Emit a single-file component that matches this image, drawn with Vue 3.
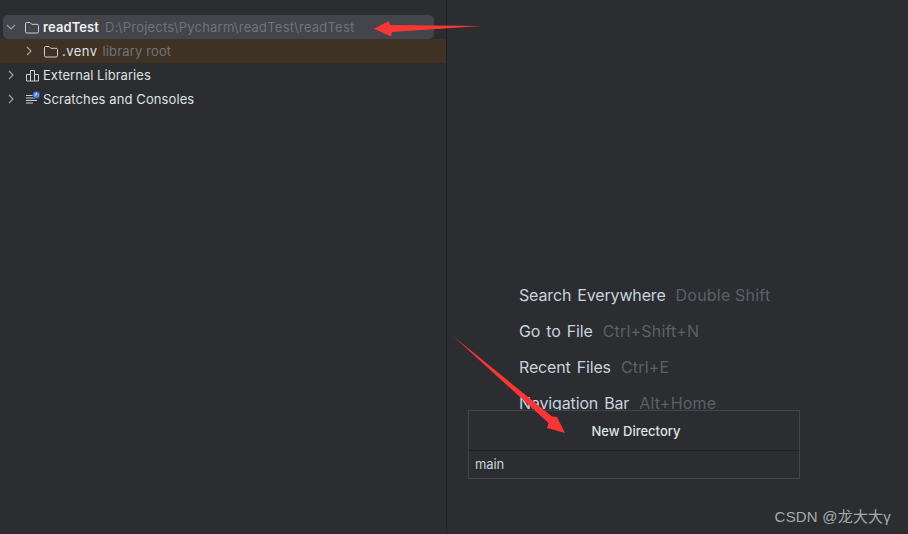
<script setup>
const hints = [
  { label: 'Search Everywhere', key: 'Double Shift' },
  { label: 'Go to File', key: 'Ctrl+Shift+N' },
  { label: 'Recent Files', key: 'Ctrl+E' },
  { label: 'Navigation Bar', key: 'Alt+Home' },
]
</script>

<template>
  <div class="ide">
    <aside class="tree">
      <div class="row selected">
        <svg class="chev" viewBox="0 0 12 12"><path d="M2 4l4 4 4-4" /></svg>
        <svg class="ico" viewBox="0 0 16 16"><path d="M1.500 4.700c0-.7.5-1.200 1.200-1.200h3.300l1.800 1.800h5.500c.7 0 1.200.5 1.200 1.200v6.300c0 .7-.5 1.200-1.200 1.200H2.700c-.7 0-1.200-.5-1.200-1.200z" /></svg>
        <span class="name bold">readTest</span>
        <span class="hint path">D:\Projects\Pycharm\readTest\readTest</span>
      </div>
      <div class="row library">
        <svg class="chev" viewBox="0 0 12 12"><path d="M4 2l4 4-4 4" /></svg>
        <svg class="ico lib-ico" viewBox="0 0 16 16"><path d="M1.500 4.700c0-.7.5-1.200 1.200-1.200h3.300l1.800 1.800h5.500c.7 0 1.200.5 1.200 1.200v6.300c0 .7-.5 1.200-1.200 1.200H2.700c-.7 0-1.200-.5-1.200-1.200z" /></svg>
        <span class="name venv">.venv</span>
        <span class="hint lib">library root</span>
      </div>
      <div class="row">
        <svg class="chev" viewBox="0 0 12 12"><path d="M4 2l4 4-4 4" /></svg>
        <svg class="ico" viewBox="0 0 16 16"><path d="M2.500 7.500h4v6.500h-4zM6.500 3.500h4v10.500h-4zM10.500 7.500h4v6.500h-4z" /></svg>
        <span class="name ext">External Libraries</span>
      </div>
      <div class="row">
        <svg class="chev" viewBox="0 0 12 12"><path d="M4 2l4 4-4 4" /></svg>
        <svg class="ico" viewBox="0 0 16 16">
          <path d="M2 4.500h7M2 7h9M2 9.500h11M2 12h7" />
          <circle class="clock" cx="12.300" cy="3.800" r="3.600" />
          <path class="hands" d="M12.300 1.800v2.200h-1.500" />
        </svg>
        <span class="name">Scratches and Consoles</span>
      </div>
    </aside>

    <main class="editor">
      <ul class="hints">
        <li v-for="h in hints" :key="h.label">
          <span class="action">{{ h.label }}</span>
          <span class="shortcut">{{ h.key }}</span>
        </li>
      </ul>

      <div class="popup">
        <div class="popup-title">New Directory</div>
        <div class="popup-input">main</div>
      </div>
    </main>

    <svg class="arrows" viewBox="0 0 908 534">
      <path d="M481.500 26L392 32 391 36.500 374 28.700 389 21 390 25z" />
      <path d="M453 336L552 416.500 557 417 565 433 547 428 548.500 423z" />
    </svg>

    <div class="mark">CSDN @龙大大γ</div>
  </div>
</template>

<style>
html, body { margin: 0; background: #2b2d30; overflow: hidden; }
</style>

<style scoped>
.ide {
  position: relative;
  width: 908px;
  height: 534px;
  display: flex;
  background: #2b2d30;
  font-family: Inter, "Noto Sans", sans-serif;
  color: #dfe1e5;
  overflow: hidden;
}
.tree {
  width: 446px;
  flex: none;
  padding-top: 15px;
  border-right: 1px solid #1e1f22;
  box-sizing: content-box;
}
.row {
  height: 24px;
  display: flex;
  align-items: center;
  font-size: 13px;
  white-space: nowrap;
  padding-left: 5px;
}
.selected {
  margin: 0 12px 0 3px;
  padding-left: 2px;
  background: #43454a;
  border-radius: 5px;
}
.library {
  background: #3f3225;
  padding-left: 23px;
}
.chev {
  width: 12px;
  height: 12px;
  flex: none;
  fill: none;
  stroke: #9da0a8;
  stroke-width: 1.2;
}
.ico {
  width: 16px;
  height: 16px;
  flex: none;
  margin-left: 7px;
  fill: none;
  stroke: #ced0d6;
  stroke-width: 1;
}
.lib-ico { margin-left: 8px; }
.clock { fill: #548af7; stroke: #2b2d30; stroke-width: 0.6; }
.hands { stroke: #fff; stroke-width: 0.7; }
.name { margin-left: 3px; letter-spacing: 0.1px; }
.venv { margin-left: 3px; letter-spacing: 0.45px; }
.ext { letter-spacing: 0.04px; }
.bold { font-weight: 600; color: #f0f1f3; }
.hint { margin-left: 6px; color: #6f737a; }
.path { letter-spacing: 0.22px; }
.lib { margin-left: 5px; letter-spacing: 0.15px; }
.editor {
  position: relative;
  flex: 1;
  padding: 277px 0 0 72px;
}
.hints {
  list-style: none;
  margin: 0;
  padding: 0;
}
.hints li {
  height: 36px;
  display: flex;
  align-items: center;
  gap: 10px;
  font-size: 16px;
  white-space: nowrap;
}
.action { color: #c9d3df; letter-spacing: -0.15px; word-spacing: 1.7px; }
.shortcut { color: #5c6068; letter-spacing: 0.2px; }
.popup {
  position: absolute;
  left: 21px;
  top: 410px;
  width: 330px;
  height: 67px;
  background: #2b2d30;
  border: 1px solid #43454a;
}
.popup-title {
  height: 39px;
  padding-left: 4px;
  display: flex;
  align-items: center;
  justify-content: center;
  font-size: 13px;
  font-weight: 500;
  color: #dfe1e5;
  border-bottom: 1px solid #1e1f22;
}
.popup-input {
  height: 27px;
  line-height: 27px;
  padding-left: 6px;
  font-size: 13px;
  letter-spacing: -0.1px;
  color: #c9d3df;
}
.arrows {
  position: absolute;
  left: 0;
  top: 0;
  width: 908px;
  height: 534px;
  fill: #f93636;
  pointer-events: none;
}
.mark {
  position: absolute;
  right: 17px;
  top: 505px;
  font-family: "Liberation Sans", "Noto Sans CJK SC", sans-serif;
  font-size: 15px;
  letter-spacing: 0.2px;
  color: #a9aaab;
  white-space: nowrap;
}
</style>
